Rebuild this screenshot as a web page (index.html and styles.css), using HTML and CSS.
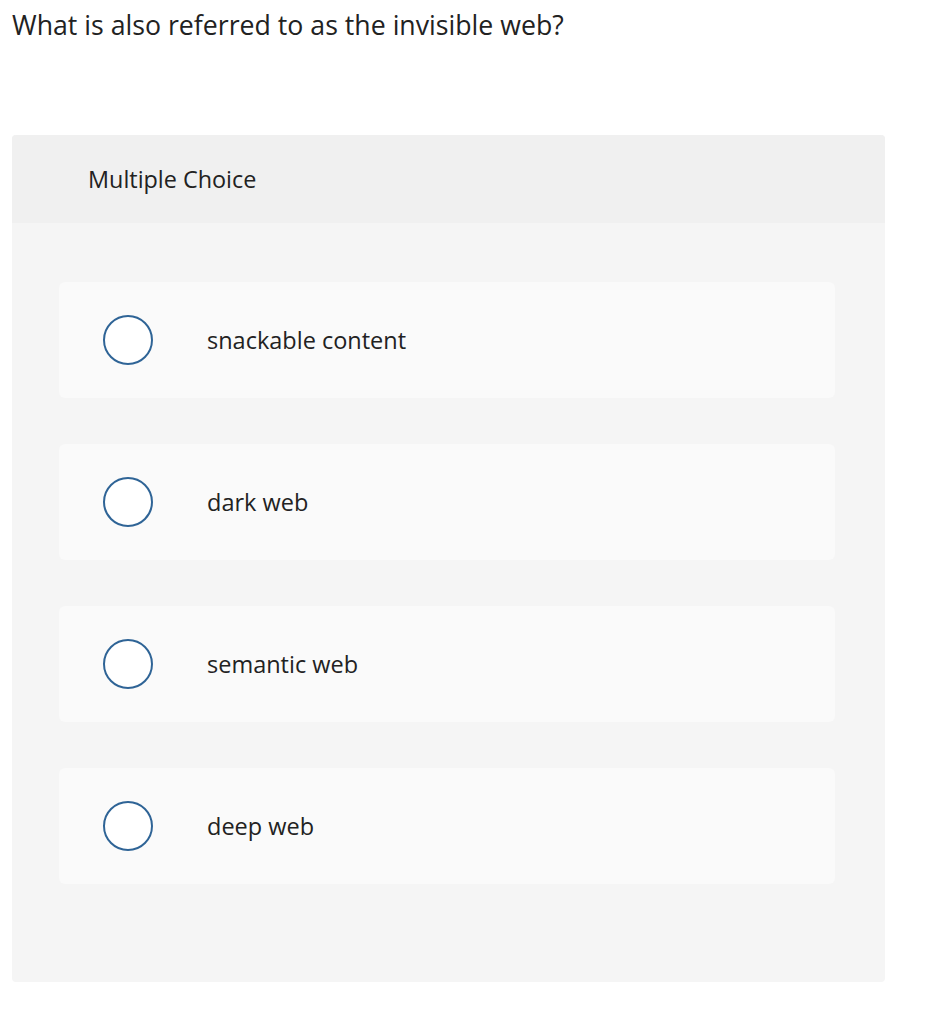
FILE: index.html
```html
<!DOCTYPE html>
<html>
<head>
<meta charset="utf-8">
<link rel="stylesheet" href="styles.css">
</head>
<body>
<h1 class="question">What is also referred to as the invisible web?</h1>
<div class="panel">
  <div class="panel-header">Multiple Choice</div>
  <div class="panel-body">
    <label class="option"><span class="radio"></span><span class="option-text">snackable content</span></label>
    <label class="option"><span class="radio"></span><span class="option-text">dark web</span></label>
    <label class="option"><span class="radio"></span><span class="option-text">semantic web</span></label>
    <label class="option"><span class="radio"></span><span class="option-text">deep web</span></label>
  </div>
</div>
</body>
</html>
```
FILE: styles.css
```css
html, body {
  margin: 0;
  padding: 0;
  background: #ffffff;
}
body {
  font-family: "Open Sans", "Lato", sans-serif;
  color: #222222;
  padding: 0 0 0 12px;
}
.question {
  margin: 0;
  padding-top: 7px;
  height: 135px;
  box-sizing: border-box;
  font-size: 26.7px;
  font-weight: 400;
  line-height: 36px;
  color: #222;
}
.panel {
  width: 873px;
  height: 847px;
  background: #f5f5f5;
  border-radius: 4px;
  overflow: hidden;
}
.panel-header {
  height: 88px;
  background: #f0f0f0;
  box-sizing: border-box;
  padding-left: 76px;
  display: flex;
  align-items: center;
  font-size: 23.4px;
  color: #222;
}
.panel-body {
  padding: 59px 50px 0 47px;
  display: flex;
  flex-direction: column;
  gap: 46px;
}
.option {
  height: 116px;
  background: #fafafa;
  border-radius: 6px;
  display: flex;
  align-items: center;
  padding-left: 44px;
}
.radio {
  width: 46px;
  height: 46px;
  border: 2px solid #2f6496;
  border-radius: 50%;
  background: #ffffff;
  flex: none;
}
.option-text {
  margin-left: 54px;
  font-size: 23.5px;
  color: #222;
}
```
